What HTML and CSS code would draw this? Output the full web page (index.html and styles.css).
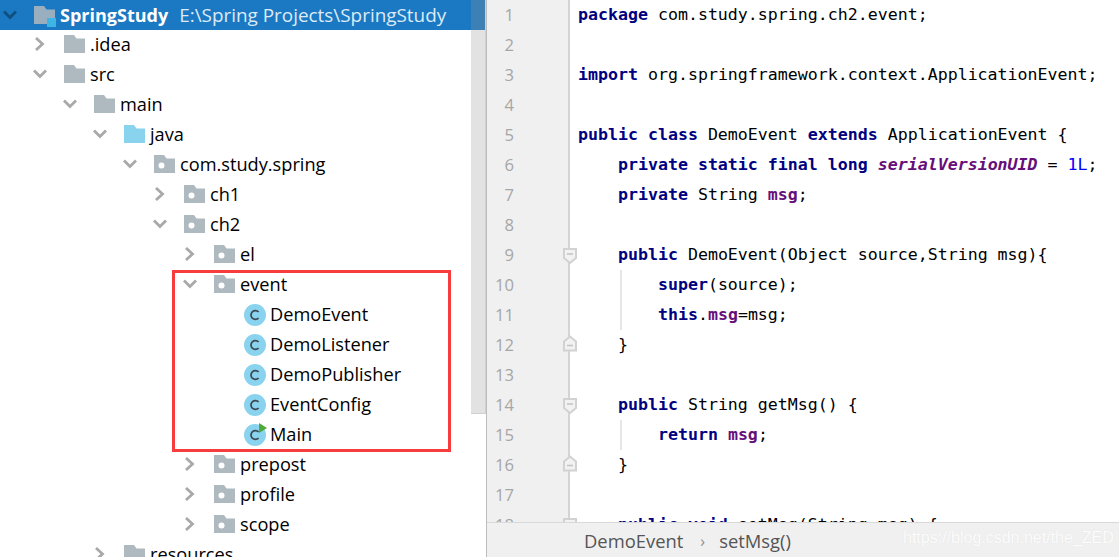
FILE: index.html
```html
<!DOCTYPE html>
<html lang="en">
<head>
<meta charset="utf-8">
<title>SpringStudy</title>
<link rel="stylesheet" href="styles.css">
<svg class="defs" width="0" height="0" aria-hidden="true">
  <defs>
    <symbol id="open" viewBox="0 0 14 14"><path d="M1 3.5 L7 9.5 L13 3.5" fill="none" stroke="currentColor" stroke-width="2.8"/></symbol>
    <symbol id="closed" viewBox="0 0 14 14"><path d="M3 1 L9.5 7 L3 13" fill="none" stroke="currentColor" stroke-width="2.8"/></symbol>
    <symbol id="folder" viewBox="0 0 21 18"><path d="M0 0H10L12.5 3.5H21V18H0Z" fill="#afb9c0"/></symbol>
    <symbol id="package" viewBox="0 0 21 18"><path d="M0 0H10L12.5 3.5H21V18H0Z" fill="#afb9c0"/><circle cx="7.5" cy="10.5" r="3" fill="#fff"/></symbol>
    <symbol id="source" viewBox="0 0 21 18"><path d="M0 0H10L12.5 3.5H21V18H0Z" fill="#8ad3ee"/></symbol>
    <symbol id="resource" viewBox="0 0 21 18"><path d="M0 0H10L12.5 3.5H21V18H0Z" fill="#afb9c0"/><path d="M13 12H21V14H13Z" fill="#f0c060"/></symbol>
    <symbol id="class" viewBox="0 0 22 22"><circle cx="11" cy="11" r="11" fill="#8ad3ee"/><path d="M14.6 8A4.4 4.4 0 1 0 14.6 14" fill="none" stroke="#3c4a52" stroke-width="1.7"/></symbol>
    <symbol id="fold-start" viewBox="0 0 14 16"><path d="M1 1H13V10L7 15L1 10Z" fill="#f2f2f2" stroke="#d2d2d2" stroke-width="2"/><path d="M4 6H10" stroke="#c4c4c4" stroke-width="1.6"/></symbol>
    <symbol id="fold-end" viewBox="0 0 14 16"><path d="M1 15H13V6L7 1L1 6Z" fill="#f2f2f2" stroke="#d2d2d2" stroke-width="2"/><path d="M4 10H10" stroke="#c4c4c4" stroke-width="1.6"/></symbol>
  </defs>
</svg>
</head>
<body>
<div class="app">
  <aside class="tree">
    <div class="row root d0"><svg class="chev chev-root"><use href="#open"/></svg><span class="root-icon"><svg class="ico"><use href="#folder"/></svg><i class="root-badge"></i></span><b class="root-name">SpringStudy</b><span class="root-path">E:\Spring Projects\SpringStudy</span></div>
    <div class="row d1"><svg class="chev"><use href="#closed"/></svg><svg class="ico"><use href="#folder"/></svg><span>.idea</span></div>
    <div class="row d1"><svg class="chev"><use href="#open"/></svg><svg class="ico"><use href="#folder"/></svg><span>src</span></div>
    <div class="row d2"><svg class="chev"><use href="#open"/></svg><svg class="ico"><use href="#folder"/></svg><span>main</span></div>
    <div class="row d3"><svg class="chev"><use href="#open"/></svg><svg class="ico"><use href="#source"/></svg><span>java</span></div>
    <div class="row d4"><svg class="chev"><use href="#open"/></svg><svg class="ico"><use href="#package"/></svg><span>com.study.spring</span></div>
    <div class="row d5"><svg class="chev"><use href="#closed"/></svg><svg class="ico"><use href="#package"/></svg><span>ch1</span></div>
    <div class="row d5"><svg class="chev"><use href="#open"/></svg><svg class="ico"><use href="#package"/></svg><span>ch2</span></div>
    <div class="row d6"><svg class="chev"><use href="#closed"/></svg><svg class="ico"><use href="#package"/></svg><span>el</span></div>
    <div class="row d6"><svg class="chev"><use href="#open"/></svg><svg class="ico"><use href="#package"/></svg><span>event</span></div>
    <div class="row d7"><span class="nochev"></span><svg class="cls"><use href="#class"/></svg><span>DemoEvent</span></div>
    <div class="row d7"><span class="nochev"></span><svg class="cls"><use href="#class"/></svg><span>DemoListener</span></div>
    <div class="row d7"><span class="nochev"></span><svg class="cls"><use href="#class"/></svg><span>DemoPublisher</span></div>
    <div class="row d7"><span class="nochev"></span><svg class="cls"><use href="#class"/></svg><span>EventConfig</span></div>
    <div class="row d7"><span class="nochev"></span><span class="main-icon"><svg class="cls"><use href="#class"/></svg><i class="run-mark"></i></span><span>Main</span></div>
    <div class="row d6"><svg class="chev"><use href="#closed"/></svg><svg class="ico"><use href="#package"/></svg><span>prepost</span></div>
    <div class="row d6"><svg class="chev"><use href="#closed"/></svg><svg class="ico"><use href="#package"/></svg><span>profile</span></div>
    <div class="row d6"><svg class="chev"><use href="#closed"/></svg><svg class="ico"><use href="#package"/></svg><span>scope</span></div>
    <div class="row d3"><svg class="chev"><use href="#closed"/></svg><svg class="ico"><use href="#resource"/></svg><span>resources</span></div>
    <div class="scrollbar"></div>
    <div class="highlight"></div>
  </aside>
  <main class="editor">
    <div class="editor-body">
      <div class="gutter">
        <div class="num">1</div>
        <div class="num">2</div>
        <div class="num">3</div>
        <div class="num">4</div>
        <div class="num">5</div>
        <div class="num">6</div>
        <div class="num">7</div>
        <div class="num">8</div>
        <div class="num">9<svg class="fold"><use href="#fold-start"/></svg></div>
        <div class="num">10</div>
        <div class="num">11</div>
        <div class="num">12<svg class="fold fold-up"><use href="#fold-end"/></svg></div>
        <div class="num">13</div>
        <div class="num">14<svg class="fold"><use href="#fold-start"/></svg></div>
        <div class="num">15</div>
        <div class="num">16<svg class="fold fold-up"><use href="#fold-end"/></svg></div>
        <div class="num">17</div>
        <div class="num">18<svg class="fold"><use href="#fold-start"/></svg></div>
      </div>
      <div class="code">
        <div class="line"><b>package</b> com.study.spring.ch2.event;</div>
        <div class="line"></div>
        <div class="line"><b>import</b> org.springframework.context.ApplicationEvent;</div>
        <div class="line"></div>
        <div class="line"><b>public class</b> DemoEvent <b>extends</b> ApplicationEvent {</div>
        <div class="line">    <b>private static final long</b> <em>serialVersionUID</em> = <u>1L</u>;</div>
        <div class="line">    <b>private</b> String <s>msg</s>;</div>
        <div class="line"></div>
        <div class="line">    <b>public</b> DemoEvent(Object source,String msg){</div>
        <div class="line guide">        <b>super</b>(source);</div>
        <div class="line guide">        <b>this</b>.<s>msg</s>=msg;</div>
        <div class="line">    }</div>
        <div class="line"></div>
        <div class="line">    <b>public</b> String getMsg() {</div>
        <div class="line guide">        <b>return</b> <s>msg</s>;</div>
        <div class="line">    }</div>
        <div class="line"></div>
        <div class="line">    <b>public void</b> setMsg(String msg) {</div>
      </div>
    </div>
    <div class="crumbs"><span>DemoEvent</span><span class="sep">›</span><span>setMsg()</span><span class="mark">https://blog.csdn.net/the_ZED</span></div>
  </main>
</div>
</body>
</html>
```
FILE: styles.css
```css
html, body {
  margin: 0;
  height: 557px;
  overflow: hidden;
  background: #fff;
}
.defs { position: absolute; }
.app {
  display: flex;
  width: 1119px;
  height: 557px;
  font-family: "Open Sans", "Noto Sans", sans-serif;
}

/* project tree */
.tree {
  position: relative;
  width: 486px;
  flex: none;
  height: 557px;
  overflow: hidden;
  border-right: 1px solid #bdbdbd;
  font-size: 18.2px;
  color: #000;
}
.row {
  display: flex;
  align-items: center;
  box-sizing: border-box;
  height: 30px;
  padding-bottom: 2px;
  white-space: nowrap;
}
.d0 { padding-left: 0; }
.d1 { padding-left: 30px; }
.d2 { padding-left: 60px; }
.d3 { padding-left: 90px; }
.d4 { padding-left: 120px; }
.d5 { padding-left: 150px; }
.d6 { padding-left: 180px; }
.d7 { padding-left: 210px; }
.chev {
  width: 14px;
  height: 14px;
  flex: none;
  margin: 0 17px 0 3px;
  color: #a9a9a9;
}
.chev-root { color: #0f4f80; }
.nochev { width: 34px; flex: none; }
.ico { width: 21px; height: 18px; flex: none; margin-right: 5px; }
.cls { width: 22px; height: 22px; flex: none; margin: 2px 4px 0 0; display: block; }
.root {
  background: #1b78c2;
  color: #fff;
  padding-bottom: 0;
}
.root-icon { position: relative; display: flex; }
.root-icon .ico { opacity: .85; }
.root-badge {
  position: absolute;
  right: 4px;
  bottom: -3px;
  width: 9px;
  height: 9px;
  background: #3fb5e5;
}
.root-name { font-weight: 700; margin-right: 11px; font-size: 18px; }
.root-path { color: #dcebf7; font-size: 18.9px; }
.main-icon { position: relative; display: flex; }
.run-mark {
  position: absolute;
  left: 15px;
  top: 1px;
  width: 0;
  height: 0;
  border-left: 8px solid #4fa83d;
  border-top: 5px solid transparent;
  border-bottom: 5px solid transparent;
}
.scrollbar {
  position: absolute;
  left: 471px;
  top: 0;
  width: 14px;
  height: 413px;
  background: rgba(150, 150, 150, .28);
  border-right: 1px solid #d0d0d0;
  border-bottom: 1px solid #d0d0d0;
}
.highlight {
  position: absolute;
  left: 172px;
  top: 270px;
  width: 273px;
  height: 176px;
  border: 3px solid #f63c3c;
}

/* editor */
.editor {
  flex: 1;
  min-width: 0;
  display: flex;
  flex-direction: column;
  height: 557px;
}
.editor-body {
  flex: none;
  height: 522px;
  display: flex;
  overflow: hidden;
}
.gutter {
  width: 81px;
  flex: none;
  background: #f0f0f0;
  border-right: 2px solid #d4d4d4;
}
.num {
  position: relative;
  height: 30px;
  line-height: 30px;
  width: 27px;
  text-align: right;
  font-family: "Open Sans", sans-serif;
  font-size: 16.6px;
  color: #a6a6a6;
}
.fold {
  position: absolute;
  left: 76px;
  top: 8px;
  width: 14px;
  height: 16px;
}
.fold-up { top: 5px; height: 17px; }
.code {
  flex: 1;
  padding-left: 8px;
  font-family: "DejaVu Sans Mono", monospace;
  font-size: 16.6px;
  color: #000;
}
.line {
  position: relative;
  height: 30px;
  line-height: 30px;
  white-space: pre;
}
.line b { color: #000080; font-weight: 700; }
.line em { color: #660e7a; font-weight: 700; font-style: italic; }
.line u { color: #0000ff; text-decoration: none; }
.line s { color: #660e7a; font-weight: 700; text-decoration: none; }
.guide::before {
  content: "";
  position: absolute;
  left: 42px;
  top: 0;
  bottom: 0;
  width: 2px;
  background: #e6e6e6;
}
.crumbs {
  flex: 1;
  position: relative;
  display: flex;
  align-items: center;
  padding: 1px 0 0 97px;
  background: #f0f0f0;
  border-top: 1px solid #d9d9d9;
  font-size: 18.4px;
  color: #555;
}
.sep { margin: 0 14px 0 17px; color: #8c8c8c; font-size: 16px; }
.mark {
  position: absolute;
  left: 416px;
  top: 6px;
  font-family: "Liberation Sans", sans-serif;
  font-size: 16px;
  color: #fff;
  opacity: .8;
  text-shadow: 0 0 1px #ddd;
}
```
